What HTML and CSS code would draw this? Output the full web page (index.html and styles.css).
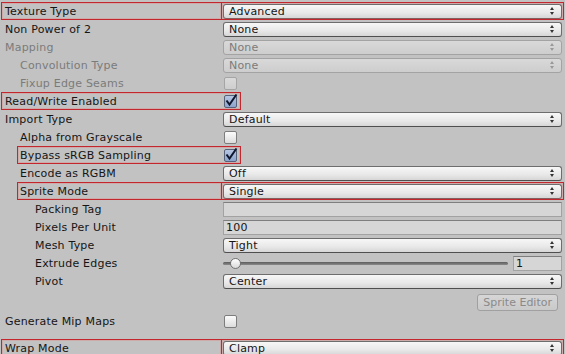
FILE: index.html
```html
<!DOCTYPE html>
<html lang="en">
<head>
    <meta charset="UTF-8">
    <meta name="viewport" content="width=device-width, initial-scale=1.0">
    <title>Texture Import Settings</title>
    <link rel="stylesheet" href="styles.css">
</head>
<body>
<div class="inspector">

  <div class="row">
    <span class="mark mark-label"></span><span class="mark mark-field"></span>
    <div class="label">Texture Type</div>
    <div class="popup">Advanced<span class="arrows"></span></div>
  </div>
  <div class="row">
    <div class="label">Non Power of 2</div>
    <div class="popup">None<span class="arrows"></span></div>
  </div>
  <div class="row off">
    <div class="label">Mapping</div>
    <div class="popup">None<span class="arrows"></span></div>
  </div>
  <div class="row off">
    <div class="label l1">Convolution Type</div>
    <div class="popup">None<span class="arrows"></span></div>
  </div>
  <div class="row off">
    <div class="label l1">Fixup Edge Seams</div>
    <div class="check"></div>
  </div>
  <div class="row">
    <span class="mark mark-toggle"></span>
    <div class="label">Read/Write Enabled</div>
    <div class="check on"><svg viewBox="0 0 14 14" width="14" height="14"><path d="M2.5 6.5 L5.5 10.5 L12.5 0.5" /></svg></div>
  </div>
  <div class="row">
    <div class="label">Import Type</div>
    <div class="popup">Default<span class="arrows"></span></div>
  </div>
  <div class="row">
    <div class="label l1">Alpha from Grayscale</div>
    <div class="check"></div>
  </div>
  <div class="row">
    <span class="mark mark-toggle indent"></span>
    <div class="label l1">Bypass sRGB Sampling</div>
    <div class="check on"><svg viewBox="0 0 14 14" width="14" height="14"><path d="M2.5 6.5 L5.5 10.5 L12.5 0.5" /></svg></div>
  </div>
  <div class="row">
    <div class="label l1">Encode as RGBM</div>
    <div class="popup">Off<span class="arrows"></span></div>
  </div>
  <div class="row">
    <span class="mark mark-label indent"></span><span class="mark mark-field"></span>
    <div class="label l1">Sprite Mode</div>
    <div class="popup">Single<span class="arrows"></span></div>
  </div>
  <div class="row">
    <div class="label l2">Packing Tag</div>
    <div class="text-field"></div>
  </div>
  <div class="row">
    <div class="label l2">Pixels Per Unit</div>
    <div class="text-field">100</div>
  </div>
  <div class="row">
    <div class="label l2">Mesh Type</div>
    <div class="popup">Tight<span class="arrows"></span></div>
  </div>
  <div class="row">
    <div class="label l2">Extrude Edges</div>
    <div class="slider">
      <div class="track"><span class="thumb"></span></div>
      <div class="text-field num">1</div>
    </div>
  </div>
  <div class="row">
    <div class="label l2">Pivot</div>
    <div class="popup">Center<span class="arrows"></span></div>
  </div>

  <div class="actions">
    <button class="btn" disabled>Sprite Editor</button>
  </div>

  <div class="row">
    <div class="label">Generate Mip Maps</div>
    <div class="check"></div>
  </div>

  <div class="row section">
    <span class="mark mark-label"></span><span class="mark mark-field"></span>
    <div class="label">Wrap Mode</div>
    <div class="popup">Clamp<span class="arrows"></span></div>
  </div>

</div>
</body>
</html>
```

FILE: styles.css
```css
body{
  margin: 0;
  background: #c2c2c2;
  font-family: "DejaVu Sans", Verdana, sans-serif;
  font-size: 11px;
  letter-spacing: 0.2px;
  color: #151515;
  overflow: hidden;
}

.inspector{
  padding-top: 2px;
}

.row{
  position: relative;
  display: flex;
  align-items: center;
  height: 18px;
}
.row.section{
  margin-top: 9px;
}

.label{
  width: 223px;
  flex: none;
  box-sizing: border-box;
  padding-left: 5px;
  white-space: nowrap;
}
.label.l1{ padding-left: 20px; }
.label.l2{ padding-left: 35px; }

.row.off .label,
.row.off .popup{
  color: #7b7b7b;
}

/* popup (dropdown) */
.popup{
  flex: 1;
  margin-right: 3px;
  height: 15px;
  box-sizing: border-box;
  display: flex;
  align-items: center;
  justify-content: space-between;
  padding: 0 6px 0 5px;
  border: 1px solid #6d6d6d;
  border-bottom-color: #4f4f4f;
  border-radius: 3px;
  background: linear-gradient(#f7f7f7, #e8e8e8 60%, #d6d6d6);
  line-height: 13px;
}
.row.off .popup{
  border-color: #a3a3a3;
  background: linear-gradient(#d9d9d9, #cdcdcd);
}

.arrows{
  width: 5px;
  height: 8px;
  position: relative;
}
.arrows::before,
.arrows::after{
  content: "";
  position: absolute;
  left: 0;
  border-left: 2.5px solid transparent;
  border-right: 2.5px solid transparent;
}
.arrows::before{
  top: 0;
  border-bottom: 3px solid #333;
}
.arrows::after{
  bottom: 0;
  border-top: 3px solid #333;
}
.row.off .arrows::before{ border-bottom-color: #999; }
.row.off .arrows::after{ border-top-color: #999; }

/* toggle */
.check{
  width: 13px;
  height: 13px;
  margin-left: 1px;
  box-sizing: border-box;
  border: 1px solid #7d7d7d;
  border-radius: 2px;
  background: linear-gradient(#fbfbfb, #dcdcdc);
  position: relative;
}
.row.off .check{
  border-color: #a5a5a5;
  background: linear-gradient(#dadada, #cecece);
}
.check.on{
  border-color: #56627a;
  background: linear-gradient(#b7c6e2, #8ea4cc);
}
.check svg{
  position: absolute;
  left: -1px;
  top: -2px;
  fill: none;
  stroke: #101830;
  stroke-width: 2;
}

/* text field */
.text-field{
  flex: 1;
  margin-right: 3px;
  height: 15px;
  box-sizing: border-box;
  border: 1px solid #a2a2a2;
  border-top-color: #7e7e7e;
  background: #d6d6d6;
  padding-left: 2px;
  line-height: 13px;
}

/* slider */
.slider{
  flex: 1;
  display: flex;
  align-items: center;
  gap: 5px;
  margin-right: 3px;
}
.track{
  flex: 1;
  height: 3px;
  border-radius: 2px;
  background: linear-gradient(#5c5c5c, #8a8a8a);
  position: relative;
}
.thumb{
  position: absolute;
  left: 7px;
  top: -4px;
  width: 11px;
  height: 11px;
  box-sizing: border-box;
  border-radius: 50%;
  border: 1px solid #727272;
  background: linear-gradient(#ffffff, #d9d9d9);
}
.text-field.num{
  flex: none;
  width: 49px;
  margin-right: 0;
}

/* button row */
.actions{
  height: 22px;
  display: flex;
  justify-content: flex-end;
  align-items: center;
  padding-right: 7px;
}
.btn{
  height: 17px;
  padding: 0 5px;
  font: inherit;
  font-size: 11px;
  color: #8a8a8a;
  border: 1px solid #a0a0a0;
  border-radius: 3px;
  background: linear-gradient(#d6d6d6, #c9c9c9);
  margin-top: 2px;
}

/* red highlight frames */
.mark{
  position: absolute;
  top: 0;
  height: 18px;
  box-sizing: border-box;
  border: 1px solid #c3262c;
  box-shadow: inset 0 0 0 1px rgba(230, 130, 130, 0.35);
  pointer-events: none;
}
.mark-label{
  left: 1px;
  width: 221px;
}
.mark-label.indent{
  left: 17px;
  width: 205px;
}
.mark-field{
  left: 221px;
  width: 343px;
}
.mark-toggle{
  left: 1px;
  width: 240px;
}
.mark-toggle.indent{
  left: 17px;
  width: 224px;
}
```
